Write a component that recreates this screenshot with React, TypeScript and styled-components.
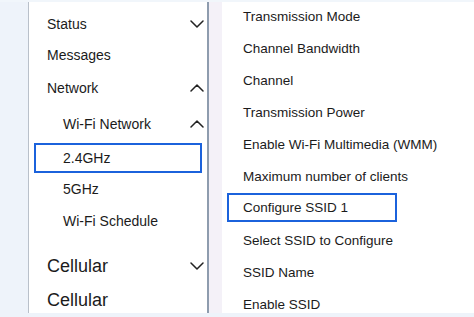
import React from 'react';
import styled, { createGlobalStyle } from 'styled-components';

const GlobalStyle = createGlobalStyle`
  html, body {
    margin: 0;
    padding: 0;
    background: #eef3fa;
    font-family: 'Liberation Sans', Arial, sans-serif;
    color: #1b1b1b;
  }
`;

const Frame = styled.div`
  display: flex;
  width: 474px;
  height: 313px;
  overflow: hidden;
  border-top: 2px solid #f1f6fb;
  box-sizing: border-box;
`;

const Gutter = styled.div`
  width: 28px;
  flex-shrink: 0;
  background: #eef3fa;
`;

const Sidebar = styled.nav`
  width: 178px;
  flex-shrink: 0;
  background: #fff;
  border-left: 1.5px solid #b9c0ca;
  border-right: 2px solid #8e9cae;
  display: flex;
  flex-direction: column;
  padding-top: 6px;
`;

const Spacer = styled.div`
  width: 13px;
  flex-shrink: 0;
  background: #f4f1f8;
`;

const Main = styled.main`
  flex: 1;
  background: #fff;
  display: flex;
  flex-direction: column;
  margin-top: -2px;
`;

const NavRow = styled.div<{ $h: number; $level: number; $large?: boolean }>`
  height: ${p => p.$h}px;
  flex-shrink: 0;
  display: flex;
  align-items: center;
  justify-content: space-between;
  padding-left: ${p => (p.$level === 0 ? 18 : 34)}px;
  padding-right: 3px;
  font-size: ${p => (p.$large ? 18 : 14)}px;
  box-sizing: border-box;
`;

const NavSelected = styled.div`
  height: 30px;
  flex-shrink: 0;
  margin: 2px 5px 2px;
  border: 2px solid #1b62dc;
  display: flex;
  align-items: center;
  padding-left: 27px;
  font-size: 14px;
  box-sizing: border-box;
`;

const Gap = styled.div<{ $h: number }>`
  height: ${p => p.$h}px;
  flex-shrink: 0;
`;

const Item = styled.div`
  height: 32px;
  display: flex;
  align-items: center;
  padding-left: 21px;
  font-size: 13.5px;
  flex-shrink: 0;
`;

const ItemSelected = styled.div`
  height: 29px;
  width: 170px;
  margin: 1px 0 2px 5px;
  border: 2px solid #1b62dc;
  display: flex;
  align-items: center;
  padding-left: 14px;
  font-size: 13.5px;
  box-sizing: border-box;
  flex-shrink: 0;
`;

const Chevron = ({ up }: { up?: boolean }) => (
  <svg width="14" height="8" viewBox="0 0 14 8" fill="none" stroke="#222" strokeWidth="1.5" strokeLinecap="round" strokeLinejoin="round">
    {up ? <path d="M1 7 L7 1 L13 7" /> : <path d="M1 1 L7 7 L13 1" />}
  </svg>
);

const settings = [
  'Transmission Mode',
  'Channel Bandwidth',
  'Channel',
  'Transmission Power',
  'Enable Wi-Fi Multimedia (WMM)',
  'Maximum number of clients',
  'Configure SSID 1',
  'Select SSID to Configure',
  'SSID Name',
  'Enable SSID',
];

export default function App() {
  return (
    <>
      <GlobalStyle />
      <Frame>
        <Gutter />
        <Sidebar>
          <NavRow $h={32} $level={0}>Status<Chevron /></NavRow>
          <NavRow $h={30} $level={0}>Messages</NavRow>
          <NavRow $h={36} $level={0}>Network<Chevron up /></NavRow>
          <NavRow $h={35} $level={1}>Wi-Fi Network<Chevron up /></NavRow>
          <NavSelected>2.4GHz</NavSelected>
          <NavRow $h={28} $level={1}>5GHz</NavRow>
          <NavRow $h={35} $level={1}>Wi-Fi Schedule</NavRow>
          <Gap $h={12} />
          <NavRow $h={32} $level={0} $large>Cellular<Chevron /></NavRow>
          <NavRow $h={36} $level={0} $large>Cellular</NavRow>
        </Sidebar>
        <Spacer />
        <Main>
          {settings.map(s =>
            s === 'Configure SSID 1' ? (
              <ItemSelected key={s}>{s}</ItemSelected>
            ) : (
              <Item key={s}>{s}</Item>
            )
          )}
        </Main>
      </Frame>
    </>
  );
}
